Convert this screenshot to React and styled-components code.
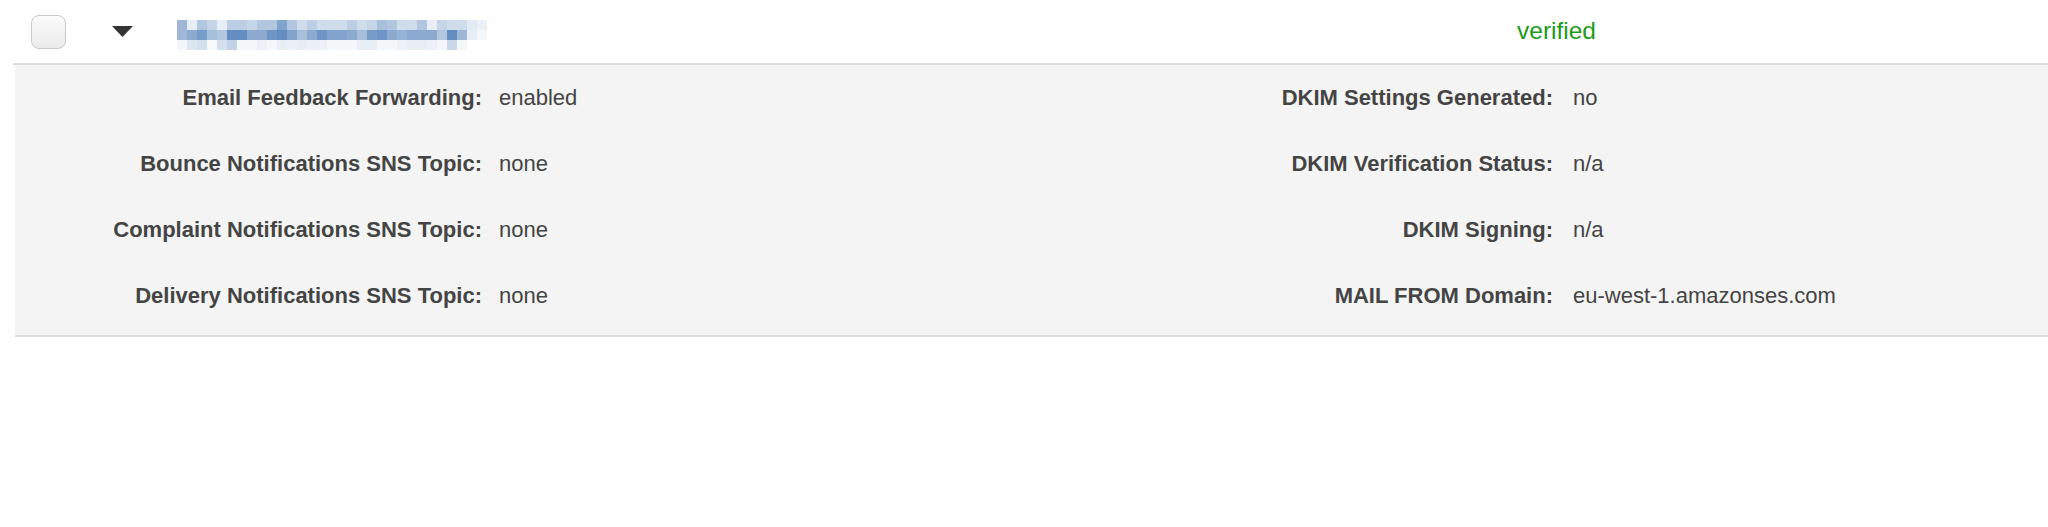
import React from "react";
import styled, { createGlobalStyle } from "styled-components";

const GlobalStyle = createGlobalStyle`
  html, body {
    margin: 0;
    padding: 0;
    background: #ffffff;
  }
  body {
    font-family: "Liberation Sans", Arial, Helvetica, sans-serif;
    color: #444444;
  }
`;

// pixelated (blurred) identity name, 3 rows of 10px blocks
const mosaic = [
  [0.5, 0.12, 0.4, 0.3, 0.12, 0.35, 0.35, 0.3, 0.4, 0.4, 0.65, 0.4, 0.25, 0.35, 0.25, 0.25, 0.25, 0.35, 0.25, 0.3, 0.45, 0.4, 0.25, 0.25, 0.4, 0.12, 0.3, 0.25, 0.25, 0.15, 0.1],
  [0.5, 0.6, 0.7, 0.45, 0.4, 0.8, 0.8, 0.6, 0.6, 0.75, 0.8, 0.65, 0.45, 0.6, 0.75, 0.65, 0.65, 0.6, 0.45, 0.7, 0.75, 0.6, 0.55, 0.6, 0.6, 0.6, 0.4, 0.8, 0.5, 0.12, 0.05],
  [0.06, 0.18, 0.22, 0.04, 0.22, 0.32, 0.06, 0.06, 0.1, 0.06, 0.12, 0.1, 0.12, 0.1, 0.1, 0.06, 0.06, 0.06, 0.12, 0.12, 0.06, 0.06, 0.1, 0.12, 0.12, 0.1, 0.06, 0.28, 0.06, 0.0, 0.0],
];

const details = [
  ["Email Feedback Forwarding:", "enabled", "DKIM Settings Generated:", "no"],
  ["Bounce Notifications SNS Topic:", "none", "DKIM Verification Status:", "n/a"],
  ["Complaint Notifications SNS Topic:", "none", "DKIM Signing:", "n/a"],
  ["Delivery Notifications SNS Topic:", "none", "MAIL FROM Domain:", "eu-west-1.amazonses.com"],
];

const App = () => {
  return (
    <Page>
      <GlobalStyle />
      <HeaderRow>
        <CheckCell>
          <Checkbox />
        </CheckCell>
        <CaretCell>
          <svg width="21" height="11" viewBox="0 0 21 11">
            <polygon points="0,0 21,0 10.5,11" fill="#333333" />
          </svg>
        </CaretCell>
        <NameCell>
          <svg width="310" height="30" viewBox="0 0 310 30">
            {mosaic.map((row, r) =>
              row.map((a, c) => (
                <rect
                  key={r + "-" + c}
                  x={c * 10}
                  y={r * 10}
                  width="10"
                  height="10"
                  fill="#3f72b0"
                  fillOpacity={a}
                />
              ))
            )}
          </svg>
        </NameCell>
        <Status>verified</Status>
      </HeaderRow>
      <Details>
        {details.map((d, i) => (
          <React.Fragment key={i}>
            <Label $gap={17}>{d[0]}</Label>
            <Value>{d[1]}</Value>
            <Label $gap={20}>{d[2]}</Label>
            <Value>{d[3]}</Value>
          </React.Fragment>
        ))}
      </Details>
    </Page>
  );
};

const Page = styled.div`
  width: 2048px;
  height: 527px;
  background: #ffffff;
  overflow: hidden;
`;

const HeaderRow = styled.div`
  display: flex;
  align-items: center;
  height: 63px;
  margin-left: 13px;
  border-bottom: 2px solid #dddddd;
`;

const CheckCell = styled.div`
  width: 86px;
  padding-left: 18px;
  box-sizing: border-box;
  display: flex;
  align-items: center;
`;

const Checkbox = styled.div`
  width: 35px;
  height: 34px;
  box-sizing: border-box;
  border: 1px solid #c9c9c9;
  border-radius: 8px;
  background: linear-gradient(#fbfbfb, #ebebeb);
  margin-top: 1px;
`;

const CaretCell = styled.div`
  width: 78px;
  padding-left: 13px;
  box-sizing: border-box;
  display: flex;
  align-items: center;
`;

const NameCell = styled.div`
  width: 1340px;
  display: flex;
  align-items: center;
  svg {
    display: block;
    margin-top: 6px;
  }
`;

const Status = styled.div`
  font-size: 24.5px;
  color: #1a9c1a;
  margin-top: -2px;
`;

const Details = styled.div`
  margin-left: 15px;
  background: #f4f4f4;
  border-bottom: 2px solid #dddddd;
  padding-bottom: 6px;
  display: grid;
  grid-template-columns: 484px 501px 573px 1fr;
  grid-auto-rows: 66px;
  align-items: center;
  font-size: 22px;
  color: #444444;
`;

const Label = styled.div`
  font-weight: bold;
  text-align: right;
  padding-right: ${(p) => p.$gap}px;
  white-space: nowrap;
`;

const Value = styled.div`
  white-space: nowrap;
`;

export default App;
